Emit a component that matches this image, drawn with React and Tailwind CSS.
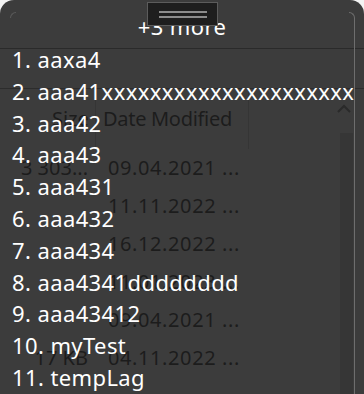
const items = [
  "aaxa4",
  "aaa41xxxxxxxxxxxxxxxxxxxxx",
  "aaa42",
  "aaa43",
  "aaa431",
  "aaa432",
  "aaa434",
  "aaa4341dddddddd",
  "aaa43412",
  "myTest",
  "tempLag",
];

const rows = [
  { size: "3 303...", date: "09.04.2021 ..." },
  { size: "", date: "11.11.2022 ..." },
  { size: "", date: "16.12.2022 ..." },
  { size: "", date: "11.01.2023 ..." },
  { size: "", date: "09.04.2021 ..." },
  { size: "17 KB", date: "04.11.2022 ..." },
];

export default function App() {
  return (
    <div
      className="w-[364px] h-[394px] bg-[#f3f3f3] overflow-hidden"
      style={{ fontFamily: '"Noto Sans", "Open Sans", sans-serif' }}
    >
      <div className="relative w-full h-full rounded-t-[14px] bg-[#3c3c3c] overflow-hidden">
        {/* file list underneath */}
        <div className="flex flex-col text-[20px] text-[#1c1c1c]">
          <div className="h-[49px] border-b border-[#2a2a2a]" />
          <div className="h-[40px] border-b border-[#2c2c2c]" />
          <div className="flex h-[60px] items-center pr-[24px]">
            <div className="w-[95px] h-full pl-[52px] flex items-center">Size</div>
            <div className="w-[153px] h-full border-l border-[#353535] pl-[7px] flex items-center tracking-[-0.3px]">
              Date Modified
            </div>
            <div className="flex-1 h-full border-l border-[#353535]" />
          </div>
          {rows.map((r, i) => (
            <div key={i} className="flex h-[38px] items-center">
              <div className="w-[88px] text-right">{r.size}</div>
              <div className="pl-[20px] tracking-[0.6px]">{r.date}</div>
            </div>
          ))}
        </div>

        {/* scrollbar */}
        <div className="absolute right-[12px] top-[102px] text-[#2a2a2a]">
          <svg width="16" height="12" viewBox="0 0 16 12">
            <path d="M2 10 L8 4 L14 10" fill="none" stroke="currentColor" strokeWidth="2" />
          </svg>
        </div>
        <div className="absolute right-[11px] top-[133px] bottom-0 w-[13px] bg-[#363636]" />
        <div className="absolute right-[9px] top-[12px] bottom-0 w-[6px] border-r border-t border-[#6e6e6e] rounded-tr-[6px]" />
        <div className="absolute left-[10px] top-[12px] w-[6px] h-[6px] border-l border-t border-[#5a5a5a] rounded-tl-[6px]" />

        {/* overlay */}
        <div className="absolute inset-0 text-white text-[22px] leading-[31.8px] tracking-[0.4px]">
          <div className="h-[44px] flex items-center justify-center pt-[10px]">+3 more</div>
          <div className="pl-[12px] whitespace-nowrap">
            {items.map((t, i) => (
              <div key={i}>
                {i + 1}. {t}
              </div>
            ))}
          </div>
        </div>

        {/* drag handle */}
        <div className="absolute left-[147px] top-[2px] w-[71px] h-[24px] bg-[#1e1e1e] border border-[#5c5c5c] flex flex-col items-center justify-center gap-[3px]">
          <div className="w-[48px] h-[2px] bg-[#8c8c8c]" />
          <div className="w-[48px] h-[2px] bg-[#8c8c8c]" />
        </div>
      </div>
    </div>
  );
}
